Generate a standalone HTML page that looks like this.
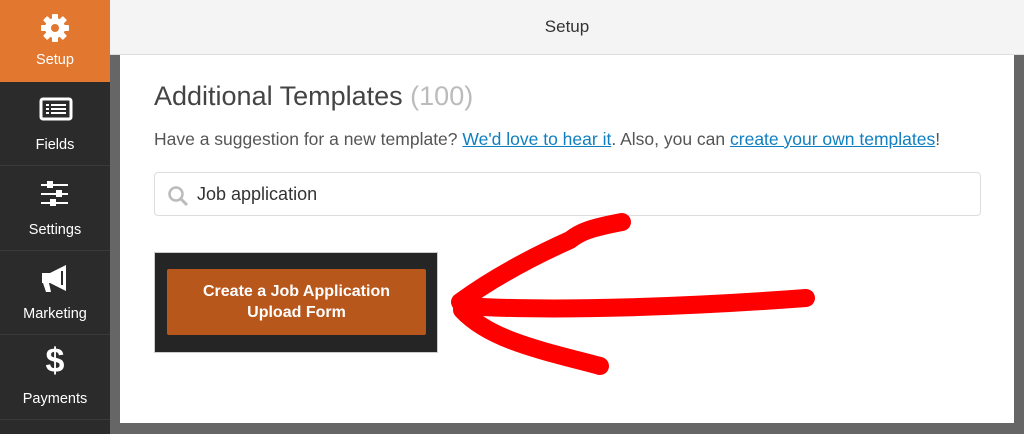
<!DOCTYPE html>
<html><head><style>
*{margin:0;padding:0;box-sizing:border-box}
body{width:1024px;height:434px;overflow:hidden;background:#666;font-family:"Liberation Sans",sans-serif;position:relative}
.side{position:absolute;left:0;top:0;width:110px;height:434px;background:#2b2b2b}
.it{position:absolute;left:0;width:110px;height:84px;border-bottom:1px solid #3a3a3a;color:#fff;font-size:14.5px;text-align:center}
.it span{position:absolute;left:0;right:0;top:55px}
.it svg{position:absolute;left:39px;top:12px}
.hdr{position:absolute;left:110px;top:0;width:914px;height:55px;background:#f4f4f4;border-bottom:1px solid #ddd;text-align:center;font-size:17px;color:#333;line-height:54px}
.panel{position:absolute;left:120px;top:55px;width:894px;height:368px;background:#fff}
h1{position:absolute;left:34px;top:26px;font-size:27px;font-weight:normal;color:#444}
h1 em{font-style:normal;color:#bbb}
.p{position:absolute;left:34px;top:74px;font-size:17.5px;color:#555}
.p a{color:#0f7fc1;text-decoration:underline}
.s{position:absolute;left:34px;top:117px;width:827px;height:44px;border:1px solid #ddd;border-radius:4px;font-size:18px;color:#333;line-height:42px;padding-left:42px}
.s svg{position:absolute;left:12px;top:12px}
.box{position:absolute;left:34px;top:197px;width:284px;height:101px;background:#252525;border:1px solid #ccc}
.btn{position:absolute;left:12px;top:16px;width:259px;height:66px;background:#b8571c;border-radius:2px;color:#fff;font-size:16px;font-weight:bold;text-align:center;line-height:21px;padding-top:12px}
</style></head><body>
<div class="side">
<div class="it" style="top:0;height:82px;background:#e27730;border:none"><svg width="32" height="32" viewBox="0 0 32 32"><g fill="#fff"><circle cx="16" cy="16" r="10"/><rect x="13" y="2" width="6" height="28" rx="1"/><rect x="2" y="13" width="28" height="6" rx="1"/><rect x="13" y="2" width="6" height="28" rx="1" transform="rotate(45 16 16)"/><rect x="13" y="2" width="6" height="28" rx="1" transform="rotate(-45 16 16)"/></g><circle cx="16" cy="16" r="4" fill="#e27730"/></svg><span style="top:52px">Setup</span></div>
<div class="it" style="top:82px"><svg width="34" height="30" viewBox="0 0 34 30"><rect x="2" y="5" width="30" height="20" rx="2" fill="none" stroke="#fff" stroke-width="3"/><g fill="#fff"><rect x="7" y="10" width="3" height="2"/><rect x="12" y="10" width="15" height="2"/><rect x="7" y="14" width="3" height="2"/><rect x="12" y="14" width="15" height="2"/><rect x="7" y="18" width="3" height="2"/><rect x="12" y="18" width="15" height="2"/></g></svg><span>Fields</span></div>
<div class="it" style="top:167px"><svg width="32" height="30" viewBox="0 0 32 30"><g fill="#fff"><rect x="2" y="5" width="27" height="2"/><rect x="8" y="2" width="6" height="7"/><rect x="2" y="14" width="27" height="2"/><rect x="17" y="11" width="6" height="7"/><rect x="2" y="23" width="27" height="2"/><rect x="11" y="20" width="6" height="7"/></g></svg><span>Settings</span></div>
<div class="it" style="top:251px"><svg width="32" height="32" viewBox="0 0 32 32"><path d="M3 10h8l16-8v26l-16-8H10l2 9H7l-3-9H3z" fill="#fff"/><path d="M23 8v14" stroke="#2b2b2b" stroke-width="2"/></svg><span>Marketing</span></div>
<div class="it" style="top:336px"><div style="position:absolute;left:0;right:0;top:6px;font-size:34px;font-weight:bold">$</div><span>Payments</span></div>
</div>
<div class="hdr">Setup</div>
<div class="panel">
<h1>Additional Templates <em>(100)</em></h1>
<div class="p">Have a suggestion for a new template? <a>We'd love to hear it</a>. Also, you can <a>create your own templates</a>!</div>
<div class="s"><svg width="22" height="22" viewBox="0 0 22 22"><circle cx="9" cy="9" r="6.5" fill="none" stroke="#bbb" stroke-width="2.5"/><path d="M14 14l6 6" stroke="#bbb" stroke-width="3"/></svg>Job application</div>
<div class="box"><div class="btn">Create a Job Application<br>Upload Form</div></div>
</div>
<svg style="position:absolute;left:0;top:0" width="1024" height="434"><g fill="none" stroke="#f00" stroke-width="18" stroke-linecap="round" stroke-linejoin="round"><path d="M622 222C590 228 580 232 570 240C530 258 490 280 460 302"/><path d="M462 306C560 312 700 306 806 298"/><path d="M462 310C490 340 540 350 600 366"/></g></svg>
</body></html>
